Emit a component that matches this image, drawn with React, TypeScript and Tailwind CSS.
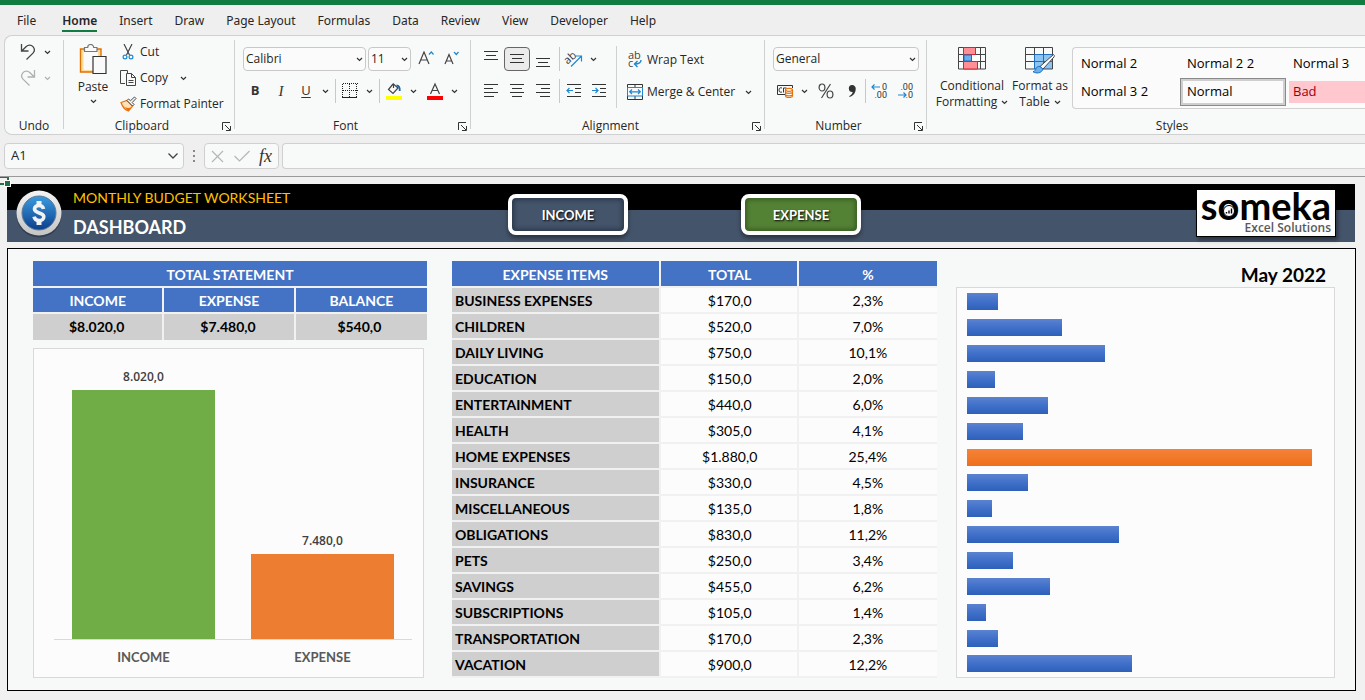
import React from 'react';

const expenses = [
    { name: 'BUSINESS EXPENSES', amount: 170, total: '$170,0', share: '2,3%' },
    { name: 'CHILDREN', amount: 520, total: '$520,0', share: '7,0%' },
    { name: 'DAILY LIVING', amount: 750, total: '$750,0', share: '10,1%' },
    { name: 'EDUCATION', amount: 150, total: '$150,0', share: '2,0%' },
    { name: 'ENTERTAINMENT', amount: 440, total: '$440,0', share: '6,0%' },
    { name: 'HEALTH', amount: 305, total: '$305,0', share: '4,1%' },
    { name: 'HOME EXPENSES', amount: 1880, total: '$1.880,0', share: '25,4%' },
    { name: 'INSURANCE', amount: 330, total: '$330,0', share: '4,5%' },
    { name: 'MISCELLANEOUS', amount: 135, total: '$135,0', share: '1,8%' },
    { name: 'OBLIGATIONS', amount: 830, total: '$830,0', share: '11,2%' },
    { name: 'PETS', amount: 250, total: '$250,0', share: '3,4%' },
    { name: 'SAVINGS', amount: 455, total: '$455,0', share: '6,2%' },
    { name: 'SUBSCRIPTIONS', amount: 105, total: '$105,0', share: '1,4%' },
    { name: 'TRANSPORTATION', amount: 170, total: '$170,0', share: '2,3%' },
    { name: 'VACATION', amount: 900, total: '$900,0', share: '12,2%' },
];

const maxExpense = Math.max(...expenses.map((e) => e.amount));

// The value axis of the column chart starts at 7200, not at zero
const AXIS_MIN = 7200;
const columns = [
    { name: 'INCOME', amount: 8020, label: '8.020,0', color: 'bg-[#70ad47]' },
    { name: 'EXPENSE', amount: 7480, label: '7.480,0', color: 'bg-[#ed7d31]' },
];

const tabs = ['File', 'Home', 'Insert', 'Draw', 'Page Layout', 'Formulas', 'Data', 'Review', 'View', 'Developer', 'Help'];

/* ---------- small ribbon parts ---------- */

function Chevron({ className = 'text-[#333]' }: { className?: string }) {
    return (
        <svg width="7" height="5" viewBox="0 0 7 5" fill="none" stroke="currentColor" strokeWidth="1.2" className={`shrink-0 ${className}`}>
            <path d="M1 1l2.5 2.5L6 1" />
        </svg>
    );
}

function MenuArrow({ label, className }: { label: string; className?: string }) {
    return (
        <button aria-label={label} className="flex h-6 w-3.5 items-center justify-center">
            <Chevron className={className} />
        </button>
    );
}

function IconButton({ label, children, wide, active }: { label: string; children: React.ReactNode; wide?: boolean; active?: boolean }) {
    return (
        <button
            aria-label={label}
            className={`flex h-6 shrink-0 items-center justify-center ${wide ? 'w-[26px]' : 'w-6'} ${active ? 'rounded border border-[#666] bg-[#ebebeb]' : ''}`}
        >
            {children}
        </button>
    );
}

function Divider() {
    return <div className="mr-0.5 ml-[3px] h-6 w-px bg-[#c8c8c8]" />;
}

function Group({ title, launcher, className = '', children }: { title: string; launcher?: boolean; className?: string; children: React.ReactNode }) {
    return (
        <section className={`flex h-[98px] shrink-0 flex-col justify-between ${className}`}>
            <div className="flex flex-1">{children}</div>
            <div className="flex h-4 items-center">
                <span className="flex-1 text-center leading-4">{title}</span>
                {launcher && (
                    <button aria-label={`${title} settings`} className="mr-[3px] flex w-[11px] justify-end">
                        <svg width="9" height="9" viewBox="0 0 9 9" fill="none" stroke="#333">
                            <path d="M.5 8V.5H8M3 3l5 5M8.500 4v4.500H4" />
                        </svg>
                    </button>
                )}
            </div>
        </section>
    );
}

function Separator() {
    return <div className="mt-1 h-[89px] w-px shrink-0 bg-[#d0d0d0]" />;
}

function Dropdown({ label, options, className }: { label: string; options: string[]; className: string }) {
    return (
        <div className={`relative ${className}`}>
            <select aria-label={label} className="h-6 w-full appearance-none rounded border border-[#c8c8c8] bg-[#fafbfa] pl-0.5 leading-4">
                {options.map((o) => (
                    <option key={o}>{o}</option>
                ))}
            </select>
            <span className="pointer-events-none absolute inset-y-0 right-[3px] flex items-center">
                <Chevron />
            </span>
        </div>
    );
}

/* Three or four text lines, given as [x1, x2, y] */
function LinesIcon({ lines }: { lines: number[][] }) {
    return (
        <svg width="16" height="18" viewBox="0 0 16 18" stroke="#333" shapeRendering="crispEdges">
            {lines.map(([x1, x2, y]) => (
                <line key={y} x1={x1} x2={x2} y1={y + 0.5} y2={y + 0.5} />
            ))}
        </svg>
    );
}

function UndoIcon() {
    return (
        <svg width="16" height="18" viewBox="0 0 16 18" fill="none" stroke="currentColor" strokeWidth="1.3">
            <path d="M1.500 1v7h7M1.700 8l4.300-4.300c2.200-2.200 5.200-2.200 7 0s1.700 4.700 0 6.400L6.500 16.500" />
        </svg>
    );
}

function PasteIcon() {
    return (
        <svg width="28" height="31" viewBox="0 0 28 31" fill="none">
            <path d="M1.500 5H22v23H1.500z" fill="#fddc9b" stroke="#e07000" strokeWidth="1.400" />
            <path d="M4.500 7h14.500v19H4.500z" fill="#fafafa" />
            <path d="M5.500 7.500v-4h3.200a3 3 0 0 1 6 0H18v4z" fill="#fafafa" stroke="#777" strokeWidth="1.200" />
            <path d="M14 12.500h13v17H14z" fill="#fafafa" stroke="#333" strokeWidth="1.200" />
        </svg>
    );
}

function CutIcon() {
    return (
        <svg width="16" height="16" viewBox="0 0 16 16" fill="none" strokeWidth="1.200">
            <path d="M4 0l5.500 11M12 0L6.500 11" stroke="#444" />
            <circle cx="5" cy="13" r="1.900" stroke="#1e88d2" />
            <circle cx="11" cy="13" r="1.900" stroke="#1e88d2" />
        </svg>
    );
}

function CopyIcon() {
    return (
        <svg width="16" height="16" viewBox="0 0 16 16" fill="none" stroke="#444">
            <path d="M5 13.500H.500V.500h7v2.500" />
            <path d="M6.500 3.500h5l4 4v8h-9z" fill="#fafafa" />
            <path d="M11.500 3.500v4h4M8.500 10.500h5M8.500 12.500h5" />
        </svg>
    );
}

function PainterIcon() {
    return (
        <svg width="17" height="16" viewBox="0 0 17 16" fill="none">
            <path d="M1 6.500l6-2 5.500 5.500-4 5C5 14 2.500 11 1 6.500z" fill="#fde2b8" stroke="#e8700a" strokeWidth="1.200" />
            <path d="M2.500 9.500l6 5.500 3-3.500c-3.500 1-6 .5-9-2z" fill="#e8700a" />
            <path d="M7 4.500l5.500 5.500 1.500-1.500-1.800-2L16 2.500 14.500 1l-4 3.700L8.500 3z" fill="#fafafa" stroke="#444" />
        </svg>
    );
}

function BordersIcon() {
    return (
        <svg width="16" height="16" viewBox="0 0 16 16" stroke="#222" fill="none" shapeRendering="crispEdges">
            <path d="M.500.500h15M.500 7.500h15M.500.500v14M7.500.500v14M14.500.500v14" strokeDasharray="1 1" />
            <path d="M0 14.500h15" />
        </svg>
    );
}

function FillIcon() {
    return (
        <svg width="16" height="18" viewBox="0 0 16 18" fill="none">
            <path d="M7 2L2.500 7.500l4.500 4 5-5.500-4.500-4V6" stroke="#444" strokeWidth="1.200" />
            <path d="M10.500 3.500c2.500 0 3.500 2 3.200 5.500" stroke="#1565a8" strokeWidth="1.800" />
            <path d="M0 14h16v4H0z" fill="#ffff00" />
        </svg>
    );
}

function FontColorIcon() {
    return (
        <svg width="16" height="18" viewBox="0 0 16 18" fill="none">
            <path d="M3.500 12L8 2l4.500 10M5 8.500h6" stroke="#444" strokeWidth="1.200" />
            <path d="M0 14h16v4H0z" fill="#ff0000" />
        </svg>
    );
}

function FontSizeIcon({ grow }: { grow?: boolean }) {
    return (
        <svg width="16" height="16" viewBox="0 0 16 16" fill="none" strokeWidth="1.200">
            <path d={grow ? 'M1 13L6 1l5 12M2.800 9h6.500' : 'M1 13l4-9.500L9 13M2.500 10h5.200'} stroke="#444" />
            <path d={grow ? 'M11 3.500L13.300 1l2.200 2.500' : 'M10 1l2.300 2.500L14.500 1'} stroke="#1e88d2" />
        </svg>
    );
}

function OrientationIcon() {
    return (
        <svg width="18" height="18" viewBox="0 0 18 18" fill="none" className="overflow-visible">
            <text x="0" y="12" fontSize="11" fill="#333" transform="rotate(-42 5 10)" fontFamily="Open Sans">ab</text>
            <path d="M6 16.500L16 6.500M11 6h5.500v5.500" stroke="#1e88d2" strokeWidth="1.200" />
        </svg>
    );
}

function IndentIcon({ increase }: { increase?: boolean }) {
    return (
        <svg width="16" height="14" viewBox="0 0 16 14" fill="none">
            <path d="M1 .500h14M9 4.500h6M9 8.500h6M1 12.500h14" stroke="#333" shapeRendering="crispEdges" />
            <path d={increase ? 'M1 6.500h6M4.500 4L7 6.500 4.500 9' : 'M1 6.500h6M3.500 4L1 6.500 3.500 9'} stroke="#1e88d2" strokeWidth="1.200" />
        </svg>
    );
}

function WrapIcon() {
    return (
        <svg width="16" height="18" viewBox="0 0 16 18" fill="none" className="overflow-visible">
            <text x="1" y="8" fontSize="11" fill="#444" fontFamily="Open Sans">ab</text>
            <text x="1" y="16" fontSize="11" fill="#444" fontFamily="Open Sans">c</text>
            <path d="M14 9c0 3-2 4-6.500 4M10.500 10l-3 3 3 3" stroke="#1e88d2" strokeWidth="1.400" />
        </svg>
    );
}

function MergeIcon() {
    return (
        <svg width="16" height="16" viewBox="0 0 16 16" fill="none">
            <path d="M.500.500h15v15H.500zM8 .500v4M8 12v3.500" stroke="#333" />
            <path d="M.500 3.500h15v8.500H.500z" fill="#fafafa" stroke="#1e88d2" />
            <path d="M3 7.800h10M5 5.500L2.700 7.800 5 10M11 5.500l2.300 2.300L11 10" stroke="#1e88d2" strokeWidth="1.200" />
        </svg>
    );
}

function CurrencyIcon() {
    return (
        <svg width="17" height="14" viewBox="0 0 17 14" fill="none">
            <path d="M8 10.500H.500V1.500h15V4" stroke="#333" />
            <path d="M5 4c-2-.8-3 .3-3 2s1 2.800 3 2M6.500 8.500V4h3" stroke="#333" />
            <path d="M8.500 6v6c0 1 1.500 1.500 3.500 1.500s3.500-.5 3.500-1.500V6" fill="#fff" stroke="#e8700a" strokeWidth="1.200" />
            <ellipse cx="12" cy="5.800" rx="3.500" ry="1.500" fill="#fff" stroke="#e8700a" strokeWidth="1.200" />
            <path d="M8.500 8.500c1 1.200 6 1.200 7 0M8.500 11c1 1.200 6 1.200 7 0" stroke="#e8700a" strokeWidth="1.200" />
        </svg>
    );
}

function PercentIcon() {
    return (
        <svg width="16" height="16" viewBox="0 0 16 16" fill="none" stroke="#444" strokeWidth="1.200">
            <ellipse cx="4" cy="4.500" rx="2.900" ry="3.500" />
            <ellipse cx="12" cy="11.500" rx="2.900" ry="3.500" />
            <path d="M12.500 1l-9 14" />
        </svg>
    );
}

function DecimalIcon({ increase }: { increase?: boolean }) {
    return (
        <svg width="18" height="18" viewBox="0 0 18 18" fill="none">
            <text x="17" y="8" fontSize="9" fill="#333" textAnchor="end" fontFamily="Roboto">{increase ? '0' : '.00'}</text>
            <text x="17" y="16" fontSize="9" fill="#333" textAnchor="end" fontFamily="Roboto">{increase ? '.00' : '.0'}</text>
            <path d={increase ? 'M10 5H2M4.500 2.500L2 5l2.500 2.500' : 'M2 13h8M7.500 10.500L10 13l-2.500 2.500'} stroke="#1e88d2" strokeWidth="1.200" />
        </svg>
    );
}

function ConditionalIcon() {
    return (
        <svg width="28" height="23" viewBox="0 0 28 23" fill="none">
            <path d="M.500.500h27v21.500H.500zM.500 7.500h27M.500 14.500h27M5.500.500v21.500M22.500.500v21.500" stroke="#444" />
            <path d="M5.500.500h12v7h-12zM5.500 14.500h14v7.500h-14z" fill="#ff8f95" stroke="#d8232a" />
            <path d="M6 8h7.500v6H6z" fill="#69b0ec" stroke="#1e6fbf" />
            <path d="M14.500 8H22v6h-7.500z" fill="#fff" />
        </svg>
    );
}

function FormatTableIcon() {
    return (
        <svg width="31" height="28" viewBox="0 0 31 28" fill="none">
            <path d="M9.500 7.500h18V22h-18z" fill="#8cc4f2" />
            <path d="M.500.500h27V22H.500zM.500 7.500h27M.500 14.500h27M9.500.500V22M18.500.500V22" stroke="#444" />
            <path d="M9.500 22V7.500h18M18.500 7.500V22M9.500 14.500h18" stroke="#1e6fbf" />
            <path d="M28.500 7.500c1 .8 1 1.600.5 2.500L18 22l-3-2.500z" fill="#fff" stroke="#444" />
            <path d="M15 19.500c-3.500-.5-4 2-4.500 3.500-.5 1-1.500 1.500-2.500 1.700 3 2 8.500 2 10-2.700z" fill="#69b0ec" stroke="#1e6fbf" />
        </svg>
    );
}

/* ---------- ribbon ---------- */

function Ribbon() {
    return (
        <div className="ml-1 flex h-[100px] overflow-hidden rounded-l-lg border border-r-0 border-[#d0d0d0] bg-[#f8faf9]">
            <Group title="Undo" className="w-[58px]">
                <div className="flex flex-col pt-[3px] pl-[11px]">
                    <div className="flex h-[26px] items-center text-[#444]">
                        <IconButton label="Undo"><UndoIcon /></IconButton>
                        <MenuArrow label="Undo history" />
                    </div>
                    <div className="flex h-[26px] items-center text-[#b0b0b0]">
                        <IconButton label="Redo"><span className="-scale-x-100"><UndoIcon /></span></IconButton>
                        <MenuArrow label="Redo history" className="text-[#b0b0b0]" />
                    </div>
                </div>
            </Group>
            <Separator />

            <Group title="Clipboard" launcher className="w-[170px]">
                <button className="ml-3 flex w-[34px] flex-col items-center pt-2">
                    <PasteIcon />
                    <span className="mt-1 leading-4">Paste</span>
                    <span className="mt-1"><Chevron /></span>
                </button>
                <div className="ml-2.5 flex flex-col pt-[3px]">
                    <button className="flex h-[26px] items-center gap-1"><CutIcon />Cut</button>
                    <div className="flex h-[26px] items-center gap-2">
                        <button className="flex items-center gap-1"><CopyIcon />Copy</button>
                        <MenuArrow label="Copy options" />
                    </div>
                    <button className="flex h-[26px] items-center gap-[3px] whitespace-nowrap"><PainterIcon />Format Painter</button>
                </div>
            </Group>
            <Separator />

            <Group title="Font" launcher className="w-[235px]">
                <div className="flex flex-col gap-2 pt-[11px] pl-[7px]">
                    <div className="flex items-center gap-0.5 pl-px">
                        <Dropdown label="Font name" options={['Calibri', 'Arial']} className="w-[123px]" />
                        <Dropdown label="Font size" options={['11', '12']} className="w-[43px]" />
                        <span className="flex">
                            <IconButton label="Increase font size" wide><FontSizeIcon grow /></IconButton>
                            <IconButton label="Decrease font size" wide><FontSizeIcon /></IconButton>
                        </span>
                    </div>
                    <div className="flex items-center text-[13px] text-[#333]">
                        <IconButton label="Bold" wide><b>B</b></IconButton>
                        <IconButton label="Italic" wide><i className="font-['Liberation_Serif',serif] text-[15px]">I</i></IconButton>
                        <IconButton label="Underline"><span className="underline underline-offset-2">U</span></IconButton>
                        <MenuArrow label="Underline styles" />
                        <Divider />
                        <IconButton label="Borders"><BordersIcon /></IconButton>
                        <MenuArrow label="Border styles" />
                        <Divider />
                        <IconButton label="Fill color"><FillIcon /></IconButton>
                        <MenuArrow label="Fill colors" />
                        <span className="w-[3px]" />
                        <IconButton label="Font color"><FontColorIcon /></IconButton>
                        <MenuArrow label="Font colors" />
                    </div>
                </div>
            </Group>
            <Separator />

            <Group title="Alignment" launcher className="w-[293px]">
                <div className="flex flex-col gap-2 pt-[11px] pl-[7px]">
                    <div className="flex items-center">
                        <IconButton label="Top align" wide><LinesIcon lines={[[1, 15, 1], [3, 13, 5], [1, 15, 9]]} /></IconButton>
                        <IconButton label="Middle align" wide active><LinesIcon lines={[[1, 15, 4], [3, 13, 8], [1, 15, 12]]} /></IconButton>
                        <IconButton label="Bottom align" wide><LinesIcon lines={[[1, 15, 8], [3, 13, 12], [1, 15, 16]]} /></IconButton>
                        <Divider />
                        <IconButton label="Orientation"><OrientationIcon /></IconButton>
                        <MenuArrow label="Orientation options" />
                    </div>
                    <div className="flex items-center">
                        <IconButton label="Align left" wide><LinesIcon lines={[[1, 15, 2], [1, 10, 6], [1, 15, 10], [1, 11, 14]]} /></IconButton>
                        <IconButton label="Center" wide><LinesIcon lines={[[1, 15, 2], [3, 13, 6], [1, 15, 10], [3, 13, 14]]} /></IconButton>
                        <IconButton label="Align right" wide><LinesIcon lines={[[1, 15, 2], [6, 15, 6], [1, 15, 10], [5, 15, 14]]} /></IconButton>
                        <Divider />
                        <IconButton label="Decrease indent"><IndentIcon /></IconButton>
                        <IconButton label="Increase indent" wide><IndentIcon increase /></IconButton>
                    </div>
                </div>
                <div className="mt-2.5 ml-1 h-[62px] w-px bg-[#d0d0d0]" />
                <div className="ml-2.5 flex flex-col gap-2 pt-3">
                    <button className="flex h-6 items-center gap-1 whitespace-nowrap"><WrapIcon />Wrap Text</button>
                    <div className="flex h-6 items-center gap-1.5">
                        <button className="flex items-center gap-1 whitespace-nowrap"><MergeIcon />Merge &amp; Center</button>
                        <MenuArrow label="Merge options" />
                    </div>
                </div>
            </Group>
            <Separator />

            <Group title="Number" launcher className="w-[161px]">
                <div className="flex flex-col gap-2 pt-[11px] pl-2">
                    <Dropdown label="Number format" options={['General', 'Currency']} className="w-[146px]" />
                    <div className="flex items-center text-[#333]">
                        <IconButton label="Accounting format"><CurrencyIcon /></IconButton>
                        <MenuArrow label="Accounting options" />
                        <span className="w-0.5" />
                        <IconButton label="Percent style" wide><PercentIcon /></IconButton>
                        <IconButton label="Comma style" wide>
                            <svg width="8" height="12" viewBox="0 0 8 12" fill="#333">
                                <path d="M4 0a3.600 3.600 0 0 1 3.700 4C7.700 8 5 11 1.500 12c-.5-.5 0-1 .3-1.200C3.500 9.800 4.500 8.500 4.700 7A3.500 3.500 0 1 1 4 0z" />
                            </svg>
                        </IconButton>
                        <div className="h-6 w-px bg-[#c8c8c8]" />
                        <IconButton label="Increase decimal" wide><DecimalIcon increase /></IconButton>
                        <IconButton label="Decrease decimal" wide><DecimalIcon /></IconButton>
                    </div>
                </div>
            </Group>
            <Separator />

            <section className="flex h-[98px] min-w-0 flex-1 flex-col justify-between">
                <div className="flex flex-1">
                    <button className="ml-2 flex w-[74px] flex-col items-center pt-[11px] leading-4">
                        <ConditionalIcon />
                        <span className="mt-2 whitespace-nowrap">Conditional</span>
                        <span className="flex items-center gap-1 whitespace-nowrap">Formatting <Chevron /></span>
                    </button>
                    <button className="flex w-[62px] flex-col items-center pt-[11px] leading-4">
                        <span className="h-[23px]"><FormatTableIcon /></span>
                        <span className="mt-2 whitespace-nowrap">Format as</span>
                        <span className="flex items-center gap-1">Table <Chevron /></span>
                    </button>
                    <div className="mt-[11px] ml-px h-[62px] min-w-0 flex-1 overflow-hidden rounded-l border border-r-0 border-[#d0d0d0] bg-[#fafbfa] pt-0.5 pl-px text-[13px] text-black">
                        <div className="grid w-[318px] grid-cols-3">
                            <button className="h-7 pl-[7px] text-left">Normal 2</button>
                            <button className="h-7 pl-[7px] text-left">Normal 2 2</button>
                            <button className="h-7 pl-[7px] text-left">Normal 3</button>
                            <button className="h-7 pl-[7px] text-left">Normal 3 2</button>
                            <button className="h-7 border border-[#8a8a8a] pl-1.5 text-left inset-ring-2 inset-ring-[#cfcfcf]">Normal</button>
                            <span className="flex items-center pl-[3px]">
                                <button className="h-[22px] w-full bg-[#ffc7ce] pl-1 text-left text-[#9c0006]">Bad</button>
                            </span>
                        </div>
                    </div>
                </div>
                <div className="h-4 pl-[52px] text-center leading-4">Styles</div>
            </section>
        </div>
    );
}

function FormulaBar() {
    return (
        <div className="mt-2 flex h-[26px]">
            <div className="ml-1 flex w-[180px] items-center rounded border border-[#d0d0d0] bg-[#f8faf9] pr-[5px] pl-1.5">
                <input aria-label="Name box" defaultValue="A1" className="min-w-0 flex-1 bg-transparent text-[13px] outline-none" />
                <button aria-label="Named cells">
                    <svg width="10" height="6" viewBox="0 0 10 6" fill="none" stroke="#444" strokeWidth="1.300"><path d="M.500.500L5 5 9.500.500" /></svg>
                </button>
            </div>
            <div className="flex w-5 flex-col items-center justify-center gap-[3px]">
                <i className="size-0.5 bg-[#888]" />
                <i className="size-0.5 bg-[#888]" />
                <i className="size-0.5 bg-[#888]" />
            </div>
            <div className="flex w-[75px] items-center justify-between rounded border border-[#d0d0d0] bg-[#f8faf9] px-1.5">
                <button aria-label="Cancel">
                    <svg width="13" height="13" viewBox="0 0 13 13" stroke="#b5b5b5" strokeWidth="1.200"><path d="M1 1l11 11M12 1L1 12" /></svg>
                </button>
                <button aria-label="Enter">
                    <svg width="16" height="12" viewBox="0 0 16 12" fill="none" stroke="#b5b5b5" strokeWidth="1.200"><path d="M.500 6l5 5L15.500 1" /></svg>
                </button>
                <button aria-label="Insert function" className="font-['Liberation_Serif',serif] text-[18px] leading-5 text-[#333] italic">fx</button>
            </div>
            <input aria-label="Formula" className="ml-[3px] min-w-0 flex-1 rounded-l border border-r-0 border-[#d0d0d0] bg-[#f8faf9] px-2 outline-none" />
        </div>
    );
}

/* ---------- worksheet ---------- */

function CoinIcon() {
    return (
        <svg width="50" height="54" viewBox="0 0 50 54">
            <defs>
                <linearGradient id="rim" x1="0" y1="0" x2="0" y2="1">
                    <stop offset="0" stopColor="#f4f4f4" />
                    <stop offset="1" stopColor="#c4c4c4" />
                </linearGradient>
                <linearGradient id="face" x1="0" y1="0" x2="0" y2="1">
                    <stop offset="0" stopColor="#3a9be0" />
                    <stop offset="1" stopColor="#0c3f8c" />
                </linearGradient>
            </defs>
            <circle cx="25" cy="29" r="22.500" fill="#000" opacity=".25" />
            <circle cx="25" cy="27" r="22.500" fill="url(#rim)" />
            <circle cx="25" cy="27" r="17" fill="url(#face)" stroke="#5f7896" />
            <path d="M29.500 23c-.5-2.500-2.200-3.500-4.500-3.500-2.600 0-4.500 1.400-4.500 3.600 0 5 9.300 2.700 9.300 7.600 0 2.400-2.100 3.800-4.800 3.800-2.500 0-4.400-1.200-4.900-3.800" fill="none" stroke="#f2f2f2" strokeWidth="3.600" />
            <path d="M25 15v5M25 34v5" stroke="#f2f2f2" strokeWidth="5" />
        </svg>
    );
}

function SheetHeader() {
    return (
        <header className="mr-px flex h-[58px] items-center bg-[linear-gradient(to_bottom,#000_26px,#44546a_26px)] pr-[19px] pl-[7px]">
            <CoinIcon />
            <div className="ml-[9px] w-[435px]">
                <div className="h-[29px] text-[14px] leading-7 text-[#ffc000]">MONTHLY BUDGET WORKSHEET</div>
                <h1 className="h-[29px] text-[18px] leading-[29px] font-bold text-white">DASHBOARD</h1>
            </div>
            <button className="mt-0.5 h-[41px] w-[120px] rounded-lg border-4 border-white bg-[#44546a] pt-1 text-[13px] font-bold text-white shadow-[0_3px_4px_rgba(0,0,0,0.4),inset_0_0_4px_2px_rgba(20,30,45,0.5)] [text-shadow:1px_1px_2px_#000]">INCOME</button>
            <button className="mt-0.5 ml-[113px] h-[41px] w-[120px] rounded-lg border-4 border-white bg-[#548235] pt-1 text-[13px] font-bold text-white shadow-[0_3px_4px_rgba(0,0,0,0.4),inset_0_0_4px_2px_rgba(30,60,15,0.5)] [text-shadow:1px_1px_2px_#000]">EXPENSE</button>
            <div className="ml-auto flex h-12 w-[140px] flex-col items-center border border-black bg-[#fdfefd] text-black shadow-[2px_3px_4px_rgba(0,0,0,0.4)]">
                <div className="text-[38px] leading-[30px] font-bold">
                    s
                    <span className="relative">
                        o
                        <svg width="12" height="12" viewBox="0 0 12 12" className="absolute bottom-[11px] left-[5px]">
                            <circle cx="6" cy="6" r="5.500" fill="#fff" stroke="#000" />
                            <path d="M3.500 8.500V7M6 8.500V5.500M8.500 8.500V3.500" stroke="#000" strokeWidth="1.400" />
                        </svg>
                    </span>
                    meka
                </div>
                <div className="self-end pr-1 font-['Open_Sans',sans-serif] text-[12px] leading-4 font-semibold text-[#595959]">Excel Solutions</div>
            </div>
        </header>
    );
}

function StatementTable() {
    return (
        <table className="w-full table-fixed border-separate border-spacing-0 text-center text-[14px] leading-5 font-bold">
            <thead className="text-white">
                <tr className="h-[27px]">
                    <th colSpan={3} className="border-b-2 border-[#f1f1f1] bg-[#4472c4] p-0 pt-0.5">TOTAL STATEMENT</th>
                </tr>
                <tr className="h-[26px]">
                    <th className="border-r-2 border-b-2 border-[#f1f1f1] bg-[#4472c4] p-0 pt-0.5">INCOME</th>
                    <th className="border-r-2 border-b-2 border-[#f1f1f1] bg-[#4472c4] p-0 pt-0.5">EXPENSE</th>
                    <th className="border-b-2 border-[#f1f1f1] bg-[#4472c4] p-0 pt-0.5">BALANCE</th>
                </tr>
            </thead>
            <tbody>
                <tr className="h-[26px] bg-[#cfcfcf]">
                    <td className="border-r-2 border-[#f1f1f1] p-0 pr-0.5">$8.020,0</td>
                    <td className="border-r-2 border-[#f1f1f1] p-0 pr-0.5">$7.480,0</td>
                    <td className="p-0 pr-1">$540,0</td>
                </tr>
            </tbody>
        </table>
    );
}

function ColumnChart() {
    return (
        <div className="mt-2 mr-[3px] flex flex-1 flex-col justify-end border border-[#d9d9d9] bg-[#fbfcfb] pr-[11px] pb-[11px] pl-5">
            <div className="flex items-end border-b border-[#d9d9d9] text-[#404040]">
                {columns.map((c) => (
                    <div key={c.name} className="flex flex-1 flex-col items-center">
                        <span className="mb-[3px] font-['Open_Sans',sans-serif] text-[12px] leading-5 font-semibold">{c.label}</span>
                        <div className={`w-4/5 ${c.color}`} style={{ height: Math.round(((c.amount - AXIS_MIN) / 820) * 249) }} />
                    </div>
                ))}
            </div>
            <div className="flex pt-2 text-[13px] leading-[18px] font-bold text-[#595959]">
                {columns.map((c) => (
                    <span key={c.name} className="flex-1 text-center">{c.name}</span>
                ))}
            </div>
        </div>
    );
}

function ExpenseTable() {
    return (
        <table className="w-full table-fixed border-separate border-spacing-0 text-center text-[14px] leading-5">
            <colgroup>
                <col className="w-[43%]" />
                <col />
                <col />
            </colgroup>
            <thead className="text-white">
                <tr className="h-[27px]">
                    <th className="border-r-2 border-b-2 border-[#f1f1f1] bg-[#4472c4] p-0 pt-0.5">EXPENSE ITEMS</th>
                    <th className="border-r-2 border-b-2 border-[#f1f1f1] bg-[#4472c4] p-0 pt-0.5 pl-0.5">TOTAL</th>
                    <th className="border-b-2 border-[#f1f1f1] bg-[#4472c4] p-0 pt-0.5">%</th>
                </tr>
            </thead>
            <tbody>
                {expenses.map((e) => (
                    <tr key={e.name} className="h-[26px] bg-[#fbfcfb]">
                        <th className="border-r-2 border-b-2 border-[#f1f1f1] bg-[#cfcfcf] p-0 pt-0.5 pl-[3px] text-left">{e.name}</th>
                        <td className="border-r-2 border-b-2 border-[#f1f1f1] p-0 pt-0.5 pl-0.5">{e.total}</td>
                        <td className="border-b-2 border-[#f1f1f1] p-0 pt-0.5">{e.share}</td>
                    </tr>
                ))}
            </tbody>
        </table>
    );
}

function ExpenseBars() {
    return (
        <div className="flex flex-1 flex-col border border-[#d9d9d9] bg-[#fbfcfb] pt-px pr-[22px] pl-2.5">
            {expenses.map((e) => (
                <div key={e.name} className="flex flex-1 items-center">
                    <div
                        className={`h-[17px] ${e.amount === maxExpense ? 'bg-linear-to-b from-[#f58238] to-[#ee7016]' : 'bg-linear-to-b from-[#5b83d0] via-[#4070ca] to-[#2e60b9]'}`}
                        style={{ width: `${(e.amount / maxExpense) * 100}%` }}
                    />
                </div>
            ))}
        </div>
    );
}

export default function App() {
    return (
        <div className="min-h-screen bg-[#f1f1f1] font-['Lato',sans-serif] text-black">
            <div className="bg-[#efefef] font-['Open_Sans',sans-serif] text-[12px] text-[#262626]">
                <div className="h-[5px] bg-[#107c41]" />
                <nav className="flex h-[30px] items-end gap-[22px] pb-[3px] pl-[17px] font-['Noto_Sans',sans-serif]">
                    {tabs.map((t) => (
                        <a
                            key={t}
                            href="#"
                            className={`h-[22px] leading-[22px] ${t === 'Home' ? 'ml-1 border-b-2 border-[#107c41] font-semibold' : ''}`}
                        >
                            {t}
                        </a>
                    ))}
                </nav>
                <Ribbon />
                <FormulaBar />
                <div className="mt-[7px] h-px bg-[#9a9a9a]" />
            </div>

            <div className="relative pt-[7px] pr-[9px] pl-[7px]">
                {/* corner of the selected cell A1 */}
                <div className="absolute top-0 left-0 h-2 w-[9px] border-t border-r-2 border-b-2 border-[#217346]">
                    <i className="absolute -right-[3px] -bottom-[3px] size-[5px] bg-[#217346] ring-1 ring-white" />
                </div>

                <SheetHeader />

                <main className="mt-1.5 grid grid-cols-[400fr_485fr_379fr] gap-x-[19px] border border-black bg-[#f7f9f8] py-3 pr-5 pl-[25px]">
                    <div className="mr-1.5 flex flex-col">
                        <StatementTable />
                        <ColumnChart />
                    </div>
                    <ExpenseTable />
                    <div className="flex flex-col">
                        <h2 className="h-[26px] pr-[9px] text-right text-[19px] leading-7 font-bold">May 2022</h2>
                        <ExpenseBars />
                    </div>
                </main>
            </div>
        </div>
    );
}
